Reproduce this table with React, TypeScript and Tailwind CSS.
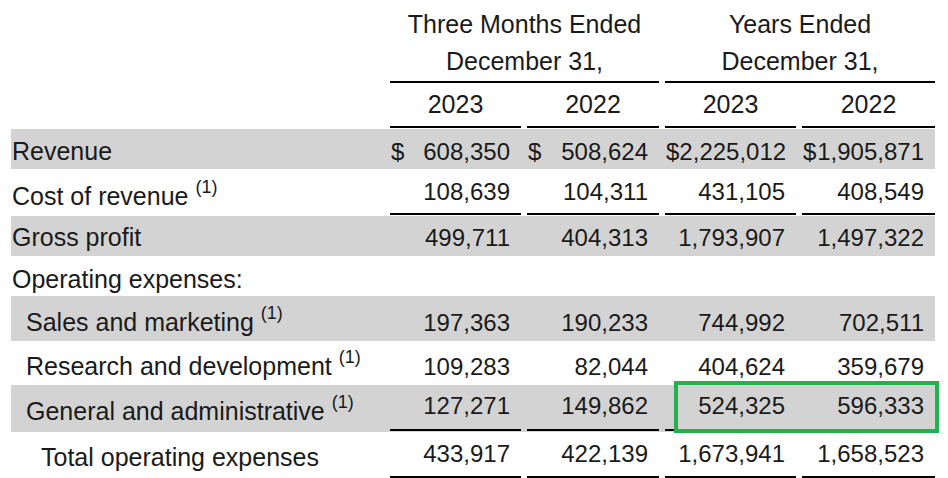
import clsx from 'clsx'

const cols = 'grid grid-cols-[373px_137px_138px_137px_139px]'

type Row = {
  label: string
  note?: boolean
  indent: string
  shaded?: boolean
  height: string
  labelPad: string
  numPad: string
  values: string[]
  underline?: 'gap' | 'flush'
  dollar?: boolean
}

const rows: Row[] = [
  {
    label: 'Revenue',
    indent: 'pl-[1px]',
    shaded: true,
    height: 'h-[40px]',
    labelPad: 'pb-[5px]',
    numPad: 'pb-[5px]',
    values: ['608,350', '508,624', '2,225,012', '1,905,871'],
    dollar: true,
  },
  {
    label: 'Cost of revenue',
    note: true,
    indent: 'pl-[1px]',
    height: 'h-[47px]',
    labelPad: 'pb-[7px]',
    numPad: 'pb-[9px]',
    values: ['108,639', '104,311', '431,105', '408,549'],
    underline: 'gap',
  },
  {
    label: 'Gross profit',
    indent: 'pl-[1px]',
    shaded: true,
    height: 'h-[40px]',
    labelPad: 'pb-[6px]',
    numPad: 'pb-[6px]',
    values: ['499,711', '404,313', '1,793,907', '1,497,322'],
  },
  {
    label: 'Operating expenses:',
    indent: 'pl-[1px]',
    height: 'h-[40px]',
    labelPad: 'pb-[4px]',
    numPad: 'pb-[4px]',
    values: ['', '', '', ''],
  },
  {
    label: 'Sales and marketing',
    note: true,
    indent: 'pl-[15px]',
    shaded: true,
    height: 'h-[45px]',
    labelPad: 'pb-[6px]',
    numPad: 'pb-[6px]',
    values: ['197,363', '190,233', '744,992', '702,511'],
  },
  {
    label: 'Research and development',
    note: true,
    indent: 'pl-[15px]',
    height: 'h-[44px]',
    labelPad: 'pb-[6px]',
    numPad: 'pb-[6px]',
    values: ['109,283', '82,044', '404,624', '359,679'],
  },
  {
    label: 'General and administrative',
    note: true,
    indent: 'pl-[15px]',
    shaded: true,
    height: 'h-[47px]',
    labelPad: 'pb-[8px]',
    numPad: 'pb-[11px]',
    values: ['127,271', '149,862', '524,325', '596,333'],
    underline: 'gap',
  },
  {
    label: 'Total operating expenses',
    indent: 'pl-[30px]',
    height: 'h-[46px]',
    labelPad: 'pb-[8px]',
    numPad: 'pb-[10px]',
    values: ['433,917', '422,139', '1,673,941', '1,658,523'],
    underline: 'flush',
  },
]

function DataRow({ row }: { row: Row }) {
  return (
    <div className={clsx(cols, row.height, row.shaded && 'bg-[#d3d3d3]')}>
      <div className={clsx('flex items-end text-[25px]', row.indent, row.labelPad)}>
        <span className="whitespace-nowrap">
          {row.label}
          {row.note && (
            <>
              {' '}
              <span className="align-[12px] text-[18px]">(1)</span>
            </>
          )}
        </span>
      </div>
      {row.values.map((v, i) => (
        <div key={i} className="flex pl-[6px]">
          <div
            className={clsx(
              'flex flex-1 items-end justify-between pr-[11px]',
              row.numPad,
              row.underline && 'border-b-2 border-black',
              row.underline === 'gap' && 'mb-[1px]'
            )}
          >
            {row.dollar ? <span className="pl-[1px]">$</span> : <span />}
            <span>{v}</span>
          </div>
        </div>
      ))}
    </div>
  )
}

export default function App() {
  return (
    <div className="relative h-[478px] w-[948px] overflow-hidden bg-white font-['Liberation_Sans',Arial,sans-serif] text-[24px] leading-none text-[#1a1a1a]">
      <div className="ml-[11px] w-[924px]">
        {/* Period headings */}
        <div className={clsx(cols, 'h-[44px] text-[25px]')}>
          <div />
          <div className="col-span-2 flex items-end justify-center pb-[7px] pl-[6px]">
            Three Months Ended
          </div>
          <div className="col-span-2 flex items-end justify-center pb-[7px] pl-[6px]">
            Years Ended
          </div>
        </div>
        <div className={clsx(cols, 'h-[40px] text-[25px]')}>
          <div />
          <div className="col-span-2 flex pl-[6px]">
            <div className="mb-[1px] flex flex-1 items-end justify-center border-b-2 border-black pb-[7px]">
              December 31,
            </div>
          </div>
          <div className="col-span-2 flex pl-[6px]">
            <div className="mb-[1px] flex flex-1 items-end justify-center border-b-2 border-black pb-[7px]">
              December 31,
            </div>
          </div>
        </div>
        <div className={clsx(cols, 'h-[45px] text-[25px]')}>
          <div />
          {['2023', '2022', '2023', '2022'].map((y, i) => (
            <div key={i} className="flex pl-[6px]">
              <div className="mb-[1px] flex flex-1 items-end justify-center border-b-2 border-black pb-[9px]">
                {y}
              </div>
            </div>
          ))}
        </div>

        {rows.map((row) => (
          <DataRow key={row.label} row={row} />
        ))}
      </div>

      {/* highlight box */}
      <div className="absolute left-[674px] top-[381px] h-[52px] w-[265px] border-4 border-[#22b14c]" />
    </div>
  )
}
